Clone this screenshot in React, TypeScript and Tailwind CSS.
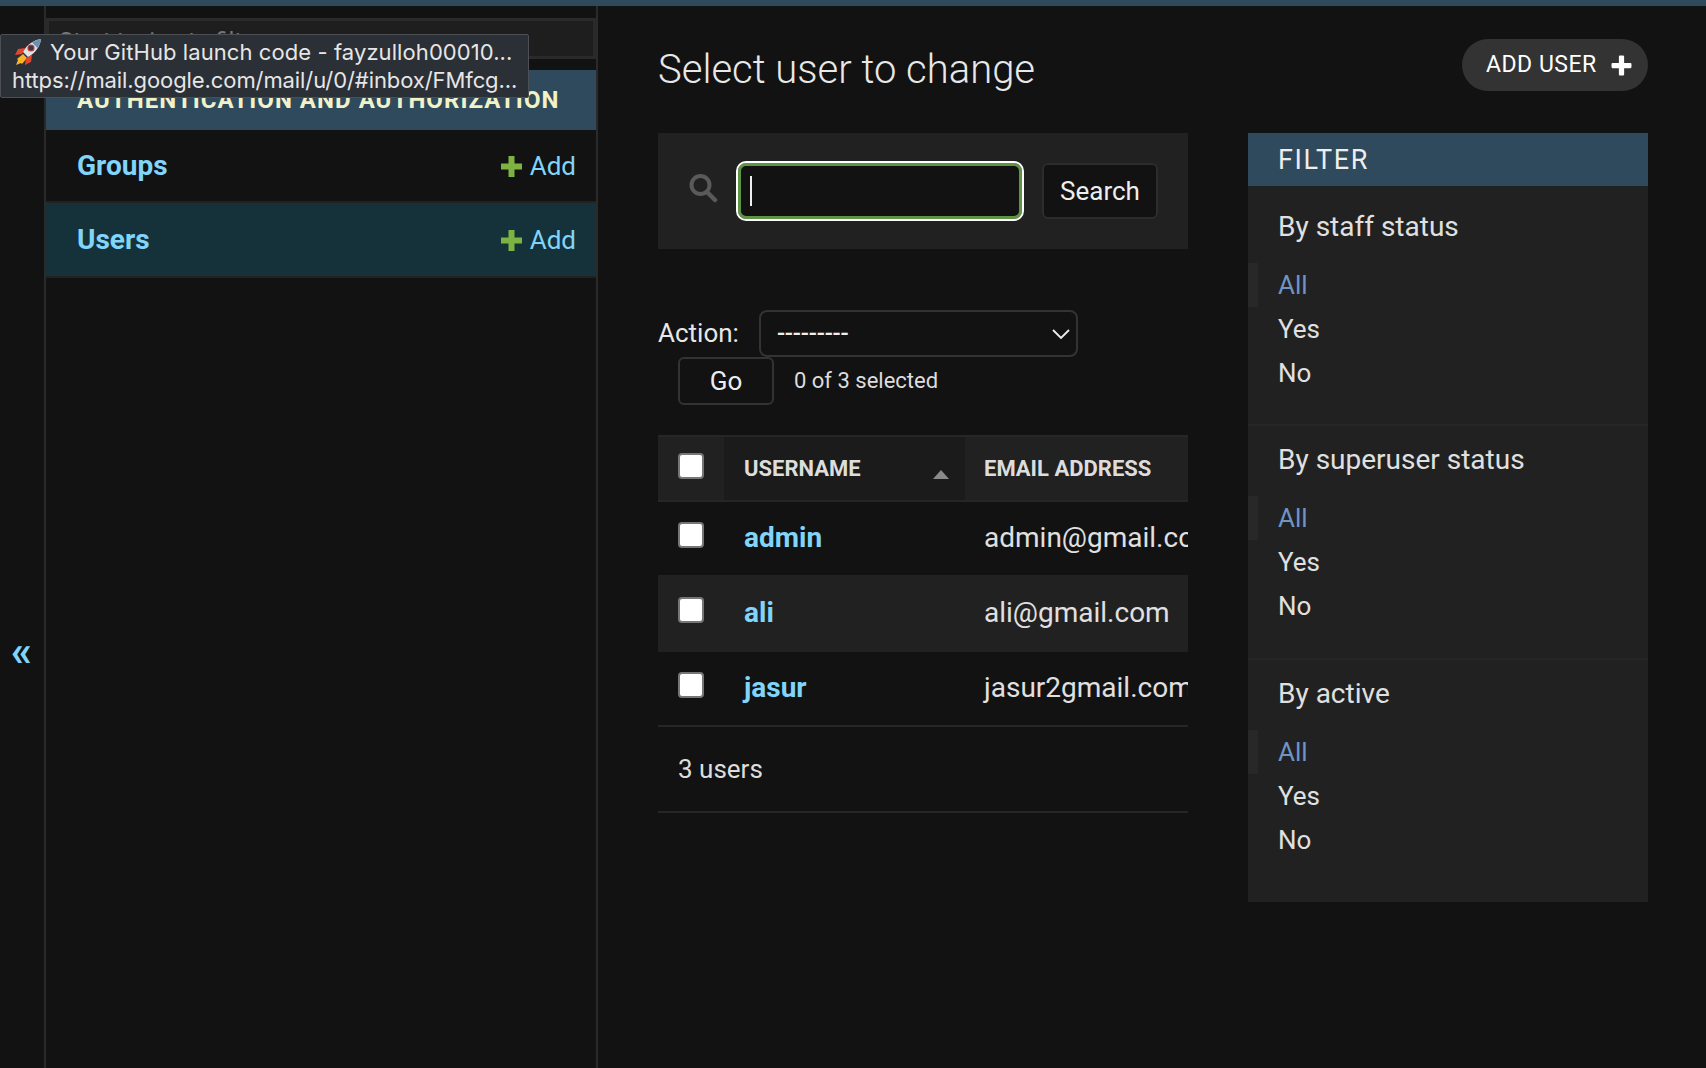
const filters = ['By staff status', 'By superuser status', 'By active']

const users = [
  { name: 'admin', email: 'admin@gmail.com', row: 'h-[73px]', box: 'pt-[20px]', text: 'pt-[16px]' },
  { name: 'ali', email: 'ali@gmail.com', row: 'h-[77px] bg-[#212121]', box: 'pt-[22px]', text: 'pt-[18px]' },
  { name: 'jasur', email: 'jasur2gmail.com', row: 'h-[75px] border-b-[2px] border-[#262626]', box: 'pt-[20px]', text: 'pt-[16px]' },
]

function Checkbox() {
  return <div className="h-[26px] w-[26px] rounded-[4px] border-[2px] border-[#767676] bg-white" />
}

function Rocket() {
  return (
    <svg width="26" height="26" viewBox="0 0 26 26" className="ml-[3px] shrink-0">
      <path d="M8 15 L2 20 L3 21 L1 26 L6 24 L7 25 L12 19 Z" fill="#f7b52c" />
      <path d="M10 9 L3 10 L0 16 L7 15 Z" fill="#e2462b" />
      <path d="M17 16 L16 23 L10 26 L11 19 Z" fill="#e2462b" />
      <path d="M26 0 C19 1 12 5 8 13 L13 18 C20 14 25 8 26 0 Z" fill="#dfe3e8" />
      <path d="M26 0 C23 .5 20 1.500 17 3.500 L22.500 9 C24.500 6 25.700 3 26 0 Z" fill="#6d8fb0" />
      <circle cx="16" cy="9" r="3" fill="#2b3a55" stroke="#c8372c" strokeWidth="1.200" />
    </svg>
  )
}

function NavRow({ label, active }: { label: string; active?: boolean }) {
  return (
    <div className={`flex items-center justify-between border-b-[2px] border-[#222222] pl-[31px] pr-[20px] ${active ? 'h-[75px] bg-[#15323a]' : 'h-[73px]'}`}>
      <span className="text-[28px] font-bold text-[#81d4fa]">{label}</span>
      <span className="mt-[1px] flex items-center gap-[8px] text-[26px] text-[#81d4fa]">
        <svg width="21" height="21" viewBox="0 0 21 21">
          <path d="M7.500 0h6v7.500H21v6h-7.500V21h-6v-7.500H0v-6h7.500z" fill="#7cb342" />
        </svg>
        Add
      </span>
    </div>
  )
}

function FilterGroup({ title, index }: { title: string; index: number }) {
  const box = ['h-[240px] pt-[21px] border-b-[2px] border-[#262626]', 'h-[234px] pt-[14px] border-b-[2px] border-[#262626]', 'h-[242px] pt-[14px]'][index]
  return (
    <div className={box}>
      <h3 className="pl-[30px] text-[28px] leading-[40px] text-[#e0e0e0]">{title}</h3>
      <ul className="mt-[16px] text-[26px] leading-[44px] text-[#e0e0e0]">
        <li className="border-l-[10px] border-[#282828] pl-[20px] text-[#6f94c6]">All</li>
        <li className="pl-[30px]">Yes</li>
        <li className="pl-[30px]">No</li>
      </ul>
    </div>
  )
}

export default function App() {
  return (
    <div className="relative h-[1068px] w-[1706px] overflow-hidden bg-[#121212] font-['Roboto',sans-serif] text-[#eeeeee]">
      <div className="h-[6px] bg-[#2f4a5c]" />

      <div className="flex h-[1062px]">
        <div className="w-[46px] shrink-0 border-r-[2px] border-[#2a2a2a] pl-[11px] pt-[625px]">
          <span className="block text-[42px] font-bold leading-none text-[#81d4fa]">«</span>
        </div>

        <aside className="w-[552px] shrink-0 border-r-[2px] border-[#2a2a2a]">
          <div className="mt-[12px] flex h-[41px] items-center border-[3px] border-[#2a2a2a] bg-[#1e1e1e] pl-[10px] pt-[4px] text-[24px] text-[#757575]">
            Start typing to filter...
          </div>
          <div className="mt-[11px] flex h-[60px] items-center bg-[#2f4a5c] pl-[31px] text-[24px] font-bold uppercase tracking-[1.04px] text-[#f2f2c8]">
            Authentication and Authorization
          </div>
          <NavRow label="Groups" />
          <NavRow label="Users" active />
        </aside>

        <main className="min-w-0 flex-1 pl-[60px] pr-[58px]">
          <div className="flex h-[127px] items-start justify-between">
            <h1 className="mt-[39px] text-[40px] font-light leading-[50px] text-[#e8e8e8]">Select user to change</h1>
            <button className="mt-[33px] flex h-[52px] w-[186px] items-center rounded-[26px] bg-[#333333] pl-[24px] text-[23px] tracking-[0.5px] text-white">
              ADD USER
              <svg width="21" height="21" viewBox="0 0 20 20" className="ml-[14px]">
                <path d="M7.500 1.500a1 1 0 0 1 1-1h3a1 1 0 0 1 1 1v6h6a1 1 0 0 1 1 1v3a1 1 0 0 1-1 1h-6v6a1 1 0 0 1-1 1h-3a1 1 0 0 1-1-1v-6h-6a1 1 0 0 1-1-1v-3a1 1 0 0 1 1-1h6z" fill="#ffffff" />
              </svg>
            </button>
          </div>

          <div className="flex gap-[60px]">
            <div className="w-[530px] shrink-0 overflow-hidden">
              <div className="flex h-[116px] items-center bg-[#212121] pl-[30px]">
                <svg width="30" height="30" viewBox="0 0 30 30" className="mb-[6px] shrink-0">
                  <circle cx="12.500" cy="12" r="9" fill="none" stroke="#5a5a5a" strokeWidth="4" />
                  <path d="M19 19l8 8" stroke="#5a5a5a" strokeWidth="4.500" strokeLinecap="round" />
                </svg>
                <div className="ml-[18px] flex h-[60px] w-[288px] items-center rounded-[10px] border-[2px] border-white bg-[#121212] pl-[12px] shadow-[inset_0_0_0_3px_#5f9444]">
                  <div className="h-[30px] w-[2px] bg-[#eeeeee]" />
                </div>
                <button className="ml-[18px] h-[56px] w-[116px] rounded-[6px] border-[2px] border-[#2c2c2c] bg-[#121212] text-[26px] text-[#eeeeee]">Search</button>
              </div>

              <div className="mt-[61px] flex h-[47px] items-center">
                <span className="text-[26px] text-[#e8e8e8]">Action:</span>
                <div className="ml-[20px] flex h-[47px] w-[319px] items-center justify-between rounded-[8px] border-[2px] border-[#333333] pl-[16px] pr-[3px] text-[24px] font-medium tracking-[-0.2px] text-[#eeeeee]">
                  <span className="mb-[2px]">---------</span>
                  <svg width="24" height="24" viewBox="0 0 24 24" fill="none" stroke="#eeeeee" strokeWidth="1.800">
                    <path d="M4 8l8 8 8-8" />
                  </svg>
                </div>
              </div>
              <div className="flex h-[48px] items-center pl-[20px]">
                <button className="h-[48px] w-[96px] rounded-[6px] border-[2px] border-[#333333] text-[26px] text-[#eeeeee]">Go</button>
                <span className="mb-[2px] ml-[20px] text-[22px] text-[#dddddd]">0 of 3 selected</span>
              </div>

              <div className="mt-[30px] flex h-[67px] border-y-[2px] border-[#262626] bg-[#212121]">
                <div className="w-[66px] shrink-0 pl-[20px] pt-[16px]">
                  <Checkbox />
                </div>
                <div className="flex w-[241px] shrink-0 justify-between bg-[#1b1b1b] pl-[20px] pr-[16px] pt-[17px]">
                  <span className="text-[22px] font-bold leading-[30px] text-[#dddddd]">USERNAME</span>
                  <svg width="16" height="9" viewBox="0 0 16 9" className="mt-[16px]">
                    <path d="M8 0l8 9H0z" fill="#8a8a8a" />
                  </svg>
                </div>
                <div className="flex-1 pl-[19px] pt-[17px] text-[22px] font-bold leading-[30px] text-[#dddddd]">EMAIL ADDRESS</div>
              </div>
              {users.map(user => (
                <div key={user.name} className={`flex ${user.row}`}>
                  <div className={`w-[66px] shrink-0 pl-[20px] ${user.box}`}>
                    <Checkbox />
                  </div>
                  <div className={`w-[241px] shrink-0 pl-[20px] text-[28px] font-bold leading-[40px] text-[#81d4fa] ${user.text}`}>{user.name}</div>
                  <div className={`whitespace-nowrap pl-[19px] text-[28px] leading-[40px] text-[#e0e0e0] ${user.text}`}>{user.email}</div>
                </div>
              ))}
              <div className="flex h-[86px] items-center border-b-[2px] border-[#262626] pl-[20px] text-[26px] text-[#dddddd]">3 users</div>
            </div>

            <div className="h-[769px] w-[400px] shrink-0 bg-[#212121]">
              <div className="flex h-[53px] items-center bg-[#2f4a5c] pl-[30px] pt-[2px] text-[27px] tracking-[1.6px] text-[#eeeeee]">FILTER</div>
              {filters.map((title, i) => (
                <FilterGroup key={title} title={title} index={i} />
              ))}
            </div>
          </div>
        </main>
      </div>

      <div className="absolute left-0 top-[34px] h-[64px] w-[529px] overflow-hidden rounded-[2px] border border-[#4c4f54] bg-[#2b2f36] px-[11px] pt-[2px] font-['Inter',sans-serif] text-[22px] leading-[30px] text-[#e6e6e6]">
        <div className="flex items-center">
          <Rocket />
          <span className="ml-[9px] whitespace-nowrap tracking-[0.08px]">Your GitHub launch code - fayzulloh00010...</span>
        </div>
        <div className="-mt-[2px] whitespace-nowrap tracking-[-0.09px]">https://mail.google.com/mail/u/0/#inbox/FMfcg...</div>
      </div>
    </div>
  )
}
